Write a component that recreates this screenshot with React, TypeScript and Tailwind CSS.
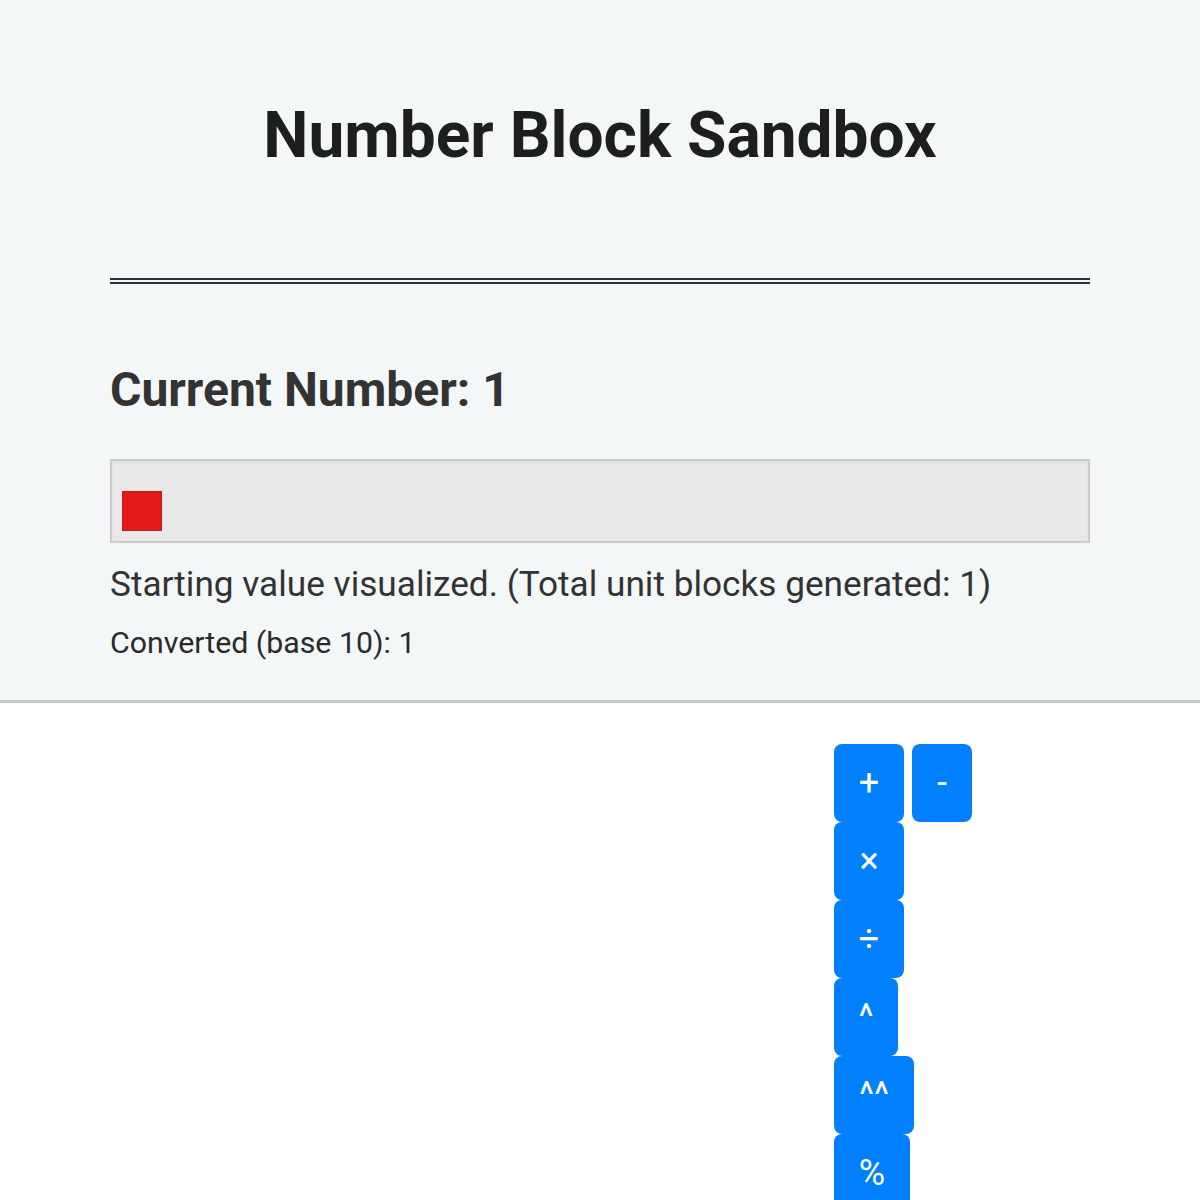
import React from 'react';

export default function App() {
  const ops = [
    { label: "+", w: "w-[70px]" },
    { label: "-", w: "w-[60px]" },
    { label: "×", w: "w-[70px]" },
    { label: "÷", w: "w-[70px]" },
    { label: "^", w: "w-[64px]" },
    { label: "^^", w: "w-[80px]" },
    { label: "%", w: "w-[76px]" },
  ];

  return (
    <div className="min-h-screen bg-white font-['Roboto',sans-serif]">
      {/* TOP PANEL */}
      <div className="bg-[#f4f7f8] border-b-[3px] border-[#c8c9c9] h-[703px] px-[110px]">
        <h1 className="text-center text-[64px] font-bold text-[#1d1e1e] pt-[98px] leading-[1.2]">Number Block Sandbox</h1>
        <div className="mt-[103px] border-t-[6px] border-double border-[#2d3133]"></div>

        <h2 className="mt-[77px] text-[48px] font-bold text-[#333] leading-[1.2]">Current Number: 1</h2>

        <div className="mt-[41px] h-[84px] bg-[#e8e8e8] border-2 border-[#cccccc] shadow-[inset_0_1px_3px_rgba(0,0,0,0.06)] px-[10px] flex items-end pb-[10px]">
          <div className="w-[40px] h-[40px] bg-[#e3191b] border border-[#c9161a]"></div>
        </div>

        <p className="mt-[20px] text-[35.2px] text-[#333] leading-[1.2]">Starting value visualized. (Total unit blocks generated: 1)</p>
        <p className="mt-[19px] text-[30.3px] text-[#2a2a2a] leading-[1.2]">Converted (base 10): 1</p>
      </div>

      {/* OPERATION BUTTONS */}
      <div className="pl-[834px] pt-[41px]">
        <div className="flex flex-wrap w-[140px] gap-x-[8px]">
          {ops.map((op, idx) => (
            <button
              key={idx}
              className={`${op.w} h-[78px] bg-[#0080ff] text-white text-[36px] rounded-[8px] flex items-center justify-center`}
            >
              {op.label}
            </button>
          ))}
        </div>
      </div>
    </div>
  );
}
